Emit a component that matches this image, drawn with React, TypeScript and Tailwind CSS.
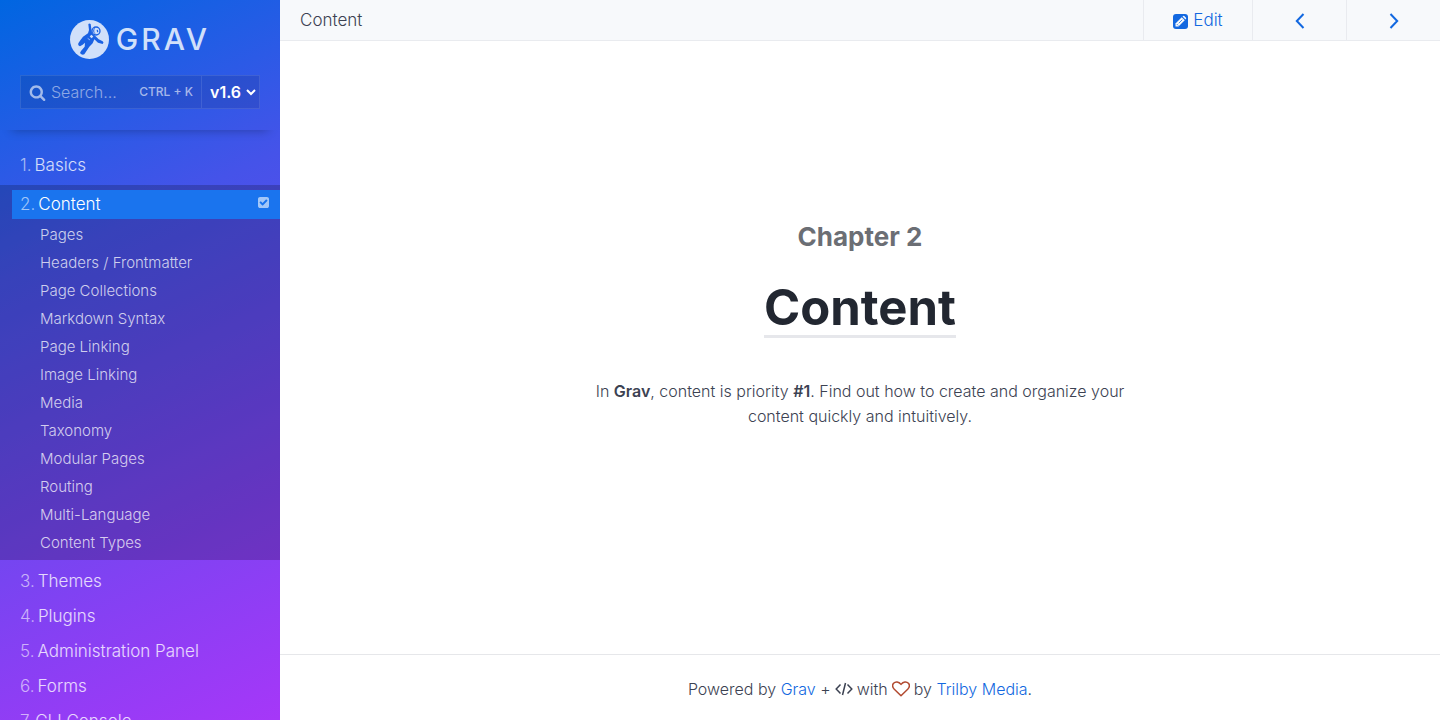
import React from "react";

type Chapter = { number: number; title: string; pages?: string[] };

const chapters: Chapter[] = [
  { number: 1, title: "Basics" },
  {
    number: 2,
    title: "Content",
    pages: [
      "Pages",
      "Headers / Frontmatter",
      "Page Collections",
      "Markdown Syntax",
      "Page Linking",
      "Image Linking",
      "Media",
      "Taxonomy",
      "Modular Pages",
      "Routing",
      "Multi-Language",
      "Content Types",
    ],
  },
  { number: 3, title: "Themes" },
  { number: 4, title: "Plugins" },
  { number: 5, title: "Administration Panel" },
  { number: 6, title: "Forms" },
  { number: 7, title: "CLI Console" },
];

function AstronautMark() {
  return (
    <svg viewBox="0 0 117 117" className="size-[39px]" aria-hidden="true">
      <circle cx="58.5" cy="58.5" r="58.5" fill="#d1e0fa" />
      <g fill="#1a61e3">
        <path d="M55 13 Q57 8 62 12 L64 26 L66 38 L76 48 L86 58 L98 64 Q103 68 98 72 L84 68 L73 58 L68 70 L58 80 L50 92 L43 103 Q35 106 30 99 L33 93 L44 80 L45 68 L38 74 L30 79 Q23 77 25 70 L31 61 L39 50 L54 40 L57 30 Z" />
      </g>
      <circle cx="78" cy="33" r="12" fill="#d1e0fa" stroke="#1a61e3" strokeWidth="4" />
      <path d="M74 25 A11 11 0 0 0 75 41" fill="none" stroke="#1a61e3" strokeWidth="3" />
      <path d="M82 31 L83 35" stroke="#1a61e3" strokeWidth="4" strokeLinecap="round" />
      <path d="M59 49 L65 44 L70 50 L64 55 Z" fill="#d1e0fa" />
      <path d="M53 55 L60 60" stroke="#d1e0fa" strokeWidth="2" />
    </svg>
  );
}

function SearchIcon() {
  return (
    <svg viewBox="0 0 1792 1792" className="size-[17px] shrink-0 fill-current" aria-hidden="true">
      <path d="M1216 832q0-185-131.5-316.5t-316.5-131.5-316.5 131.5-131.5 316.5 131.5 316.5 316.5 131.5 316.5-131.5 131.5-316.5zm512 832q0 52-38 90t-90 38q-54 0-90-38l-343-342q-179 124-399 124-143 0-273.5-55.5t-225-150-150-225-55.5-273.5 55.5-273.5 150-225 225-150 273.5-55.5 273.5 55.5 225 150 150 225 55.5 273.5q0 220-124 399l343 343q37 37 37 90z" />
    </svg>
  );
}

function CheckSquareIcon() {
  return (
    <svg viewBox="128 128 1536 1536" className="size-[11px] fill-current" aria-hidden="true">
      <path d="M813 1299l614-614q19-19 19-45t-19-45l-102-102q-19-19-45-19t-45 19l-467 467-211-211q-19-19-45-19t-45 19l-102 102q-19 19-19 45t19 45l358 358q19 19 45 19t45-19zm851-883v960q0 119-84.5 203.5t-203.5 84.5h-960q-119 0-203.5-84.5t-84.5-203.5v-960q0-119 84.5-203.5t203.5-84.5h960q119 0 203.5 84.5t84.5 203.5z" />
    </svg>
  );
}

function PencilSquareIcon() {
  return (
    <svg viewBox="0 0 30 30" className="size-[15px]" aria-hidden="true">
      <rect width="30" height="30" rx="6" fill="#1268e0" />
      <path d="M5 25 V19 L17.5 6.5 L23.5 12.5 L11 25 Z" fill="#f7f9fb" />
      <path d="M19 5 L20.5 3.8 Q21.5 3 22.5 4 L26 7.5 Q27 8.5 26 9.5 L25 11 Z" fill="#f7f9fb" />
      <path d="M7.5 20 L10.5 23 M11.5 18.5 L18.5 11.5" stroke="#1268e0" strokeWidth="1.5" />
    </svg>
  );
}

function Angle({ d }: { d: string }) {
  return (
    <svg viewBox="0 0 10 16" className="h-4 w-[10px]" aria-hidden="true">
      <path d={d} fill="none" stroke="currentColor" strokeWidth="2" />
    </svg>
  );
}

function CodeIcon() {
  return (
    <svg viewBox="0 0 18 14" className="h-[14px] w-[18px]" role="img" aria-label="code">
      <path d="M5.5 2.5 L1.2 7 L5.5 11.5 M12.5 2.5 L16.8 7 L12.5 11.5 M10.5 1 L7.5 13" fill="none" stroke="currentColor" strokeWidth="1.5" />
    </svg>
  );
}

function HeartIcon() {
  return (
    <svg viewBox="0 0 18 16" className="h-4 w-[18px] text-[#b1492f]" role="img" aria-label="love">
      <path
        d="M9 14.8 L2.3 8.3 C0.4 6.3 0.4 3.7 1.6 2.3 C3.4 0.4 6.7 0.5 9 3.4 C11.3 0.5 14.6 0.4 16.4 2.3 C17.6 3.7 17.6 6.3 15.7 8.3 Z"
        fill="none"
        stroke="currentColor"
        strokeWidth="1.5"
        strokeLinejoin="round"
      />
    </svg>
  );
}

function ChapterLabel({ chapter }: { chapter: Chapter }) {
  return (
    <span className="flex gap-[3px]">
      <span className="text-white/60">{chapter.number}.</span>
      <span>{chapter.title}</span>
    </span>
  );
}

function ChapterItem({ chapter }: { chapter: Chapter }) {
  if (!chapter.pages) {
    return (
      <li>
        <a href="#" className="block px-5 leading-[35px] text-white/80">
          <ChapterLabel chapter={chapter} />
        </a>
      </li>
    );
  }
  return (
    <li className="mt-[2px] mb-1 bg-black/20 pt-[5px] pb-[3px]">
      <a href="#" aria-current="page" className="ml-3 flex items-start justify-between bg-[#1a74ee] pr-[11px] pl-2 leading-[29px] text-white">
        <ChapterLabel chapter={chapter} />
        <span className="pt-[7px] text-white/60">
          <CheckSquareIcon />
        </span>
      </a>
      <ul className="pt-[2px]">
        {chapter.pages.map((page) => (
          <li key={page}>
            <a href="#" className="block pl-10 text-[15px] leading-7 text-white/75">
              {page}
            </a>
          </li>
        ))}
      </ul>
    </li>
  );
}

export default function App() {
  return (
    <div className="flex min-h-screen bg-white font-['Inter',sans-serif] text-[17px] font-light text-[#3c4252]">
      <aside className="sticky top-0 flex h-screen w-[280px] shrink-0 flex-col overflow-hidden bg-[linear-gradient(155deg,#0066e1_0%,#4553e9_33%,#a637f8_100%)]">
        <header className="px-5 pt-5 pb-[21px] shadow-[0_12px_10px_-12px_rgba(0,0,0,0.3)]">
          <a href="#" className="flex items-center justify-center gap-[7px]">
            <AstronautMark />
            <span className="text-[30px] leading-[39px] font-medium tracking-widest text-[#d1e0fa]">GRAV</span>
          </a>
          <div className="mt-4 flex h-[34px] border border-white/10 bg-black/10">
            <label className="flex min-w-0 flex-1 items-center gap-[5px] px-2 text-white/60">
              <SearchIcon />
              <input
                type="search"
                aria-label="Search"
                placeholder="Search..."
                className="w-0 min-w-0 flex-1 bg-transparent text-base outline-none placeholder:text-white/50"
              />
              <span className="text-xs font-medium">CTRL + K</span>
            </label>
            <select
              aria-label="Version"
              className="w-[58px] border-l border-white/10 bg-transparent pl-1 text-base font-semibold text-white outline-none"
            >
              <option>v1.6</option>
            </select>
          </div>
        </header>
        <nav aria-label="Chapters" className="pt-[18px]">
          <ul>
            {chapters.map((chapter) => (
              <ChapterItem key={chapter.number} chapter={chapter} />
            ))}
          </ul>
        </nav>
      </aside>

      <div className="flex min-w-0 flex-1 flex-col">
        <div className="flex h-[41px] items-stretch border-b border-[#e9ebef] bg-[#f7f9fb]">
          <span className="flex flex-1 items-center px-5 pt-[2px]">Content</span>
          <a href="#" className="flex w-[109px] items-center justify-center gap-[5px] border-l border-[#e9ebef] pt-[2px] text-[#1268e0]">
            <PencilSquareIcon />
            Edit
          </a>
          <a href="#" aria-label="Previous page" className="flex w-[94px] items-center justify-center border-l border-[#e9ebef] pt-[2px] text-[#1268e0]">
            <Angle d="M8.5 1 L1.8 8 L8.5 15" />
          </a>
          <a href="#" aria-label="Next page" className="flex w-[94px] items-center justify-center border-l border-[#e9ebef] pt-[2px] text-[#1268e0]">
            <Angle d="M1.5 1 L8.2 8 L1.5 15" />
          </a>
        </div>

        <main className="flex flex-1 flex-col items-center justify-center px-5 pb-[50px] text-center">
          <h3 className="text-[26px] leading-10 font-bold text-[#6b6e74]">Chapter 2</h3>
          <h1 className="mt-6 border-b-[3px] border-[#e6e7eb] text-[49px] leading-[54px] font-bold text-[#222731]">Content</h1>
          <p className="mt-[41px] max-w-[560px] text-base leading-[25px]">
            In <strong className="font-semibold">Grav</strong>, content is priority{" "}
            <strong className="font-semibold">#1</strong>. Find out how to create and organize your content quickly and
            intuitively.
          </p>
        </main>

        <footer className="flex h-[66px] items-center justify-center gap-1 border-t border-[#e6e7ea] pt-[2px] text-base">
          <span>
            Powered by{" "}
            <a href="#" className="text-[#1268e0]">
              Grav
            </a>{" "}
            +
          </span>
          <CodeIcon />
          <span>with</span>
          <HeartIcon />
          <span>
            by{" "}
            <a href="#" className="text-[#1268e0]">
              Trilby Media
            </a>
            .
          </span>
        </footer>
      </div>
    </div>
  );
}
